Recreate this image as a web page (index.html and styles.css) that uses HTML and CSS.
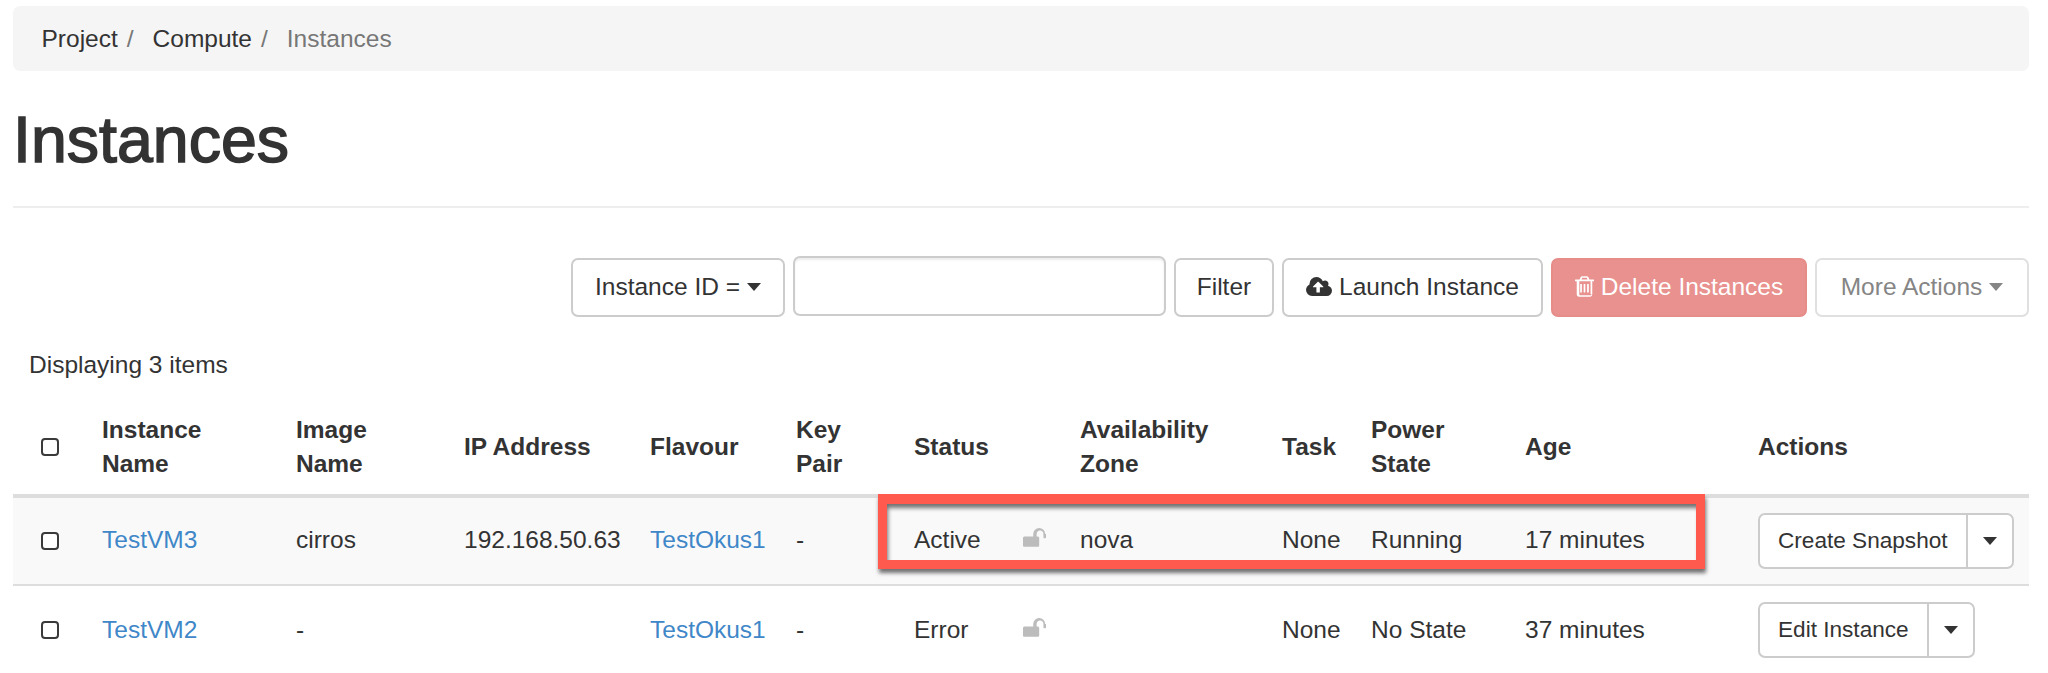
FILE: index.html
```html
<!DOCTYPE html>
<html lang="en">
<head>
<meta charset="utf-8">
<title>Instances</title>
<link rel="stylesheet" href="styles.css">
</head>
<body>
<main class="page">
  <nav class="breadcrumb">
    <span>Project</span><span class="sep">/</span>
    <span>Compute</span><span class="sep">/</span>
    <span class="active">Instances</span>
  </nav>
  <h1 class="title">Instances</h1>
  <hr class="rule">
  <div class="toolbar">
    <button class="btn btn-select">Instance ID =<span class="caret"></span></button>
    <input class="search" type="text" aria-label="Filter">
    <button class="btn btn-filter">Filter</button>
    <button class="btn btn-launch">
      <svg class="icon-cloud" viewBox="0 128 1920 1408" aria-hidden="true"><path fill-rule="evenodd" d="M1280 864q0-14-9-23L919 489q-9-9-23-9t-23 9L522 840q-10 12-10 24 0 14 9 23t23 9h224v352q0 13 9.5 22.5t22.5 9.5h192q13 0 22.5-9.5t9.5-22.5V896h224q13 0 22.5-9.5t9.5-22.5zm640 288q0 159-112.5 271.5T1536 1536H448q-185 0-316.5-131.5T0 1088q0-130 70-240t188-165q-2-30-2-43 0-212 150-362t362-150q156 0 285.5 87T1242 446q71-62 166-62 106 0 181 75t75 181q0 76-41 138 130 31 213.5 135.5T1920 1152z"/></svg>
      Launch Instance
    </button>
    <button class="btn btn-delete">
      <svg class="icon-trash" viewBox="192 128 1408 1536" aria-hidden="true"><path d="M704 736v576q0 14-9 23t-23 9h-64q-14 0-23-9t-9-23V736q0-14 9-23t23-9h64q14 0 23 9t9 23zm256 0v576q0 14-9 23t-23 9h-64q-14 0-23-9t-9-23V736q0-14 9-23t23-9h64q14 0 23 9t9 23zm256 0v576q0 14-9 23t-23 9h-64q-14 0-23-9t-9-23V736q0-14 9-23t23-9h64q14 0 23 9t9 23zm128 724V512H512v948q0 22 7 40.5t14.5 27 10.5 8.5h832q3 0 10.5-8.5t14.5-27 7-40.5zM672 384h448l-48-117q-7-9-17-11H738q-10 2-17 11zm928 32v64q0 14-9 23t-23 9h-96v948q0 83-47 143.5t-113 60.5H480q-66 0-113-58.5T320 1464V512h-96q-14 0-23-9t-9-23v-64q0-14 9-23t23-9h309l70-167q15-37 54-63t79-26h320q40 0 79 26t54 63l70 167h309q14 0 23 9t9 23z"/></svg>
      Delete Instances
    </button>
    <button class="btn btn-more">More Actions<span class="caret"></span></button>
  </div>
  <p class="count">Displaying 3 items</p>
  <table class="grid">
    <colgroup>
      <col class="w-check"><col class="w-name"><col class="w-image"><col class="w-ip"><col class="w-flavour"><col class="w-key"><col class="w-status"><col class="w-lock"><col class="w-zone"><col class="w-task"><col class="w-power"><col class="w-age"><col class="w-actions">
    </colgroup>
    <thead>
      <tr>
        <th class="cell-check"><input class="check" type="checkbox" aria-label="Select all"></th>
        <th>Instance<br>Name</th>
        <th>Image<br>Name</th>
        <th>IP Address</th>
        <th>Flavour</th>
        <th>Key<br>Pair</th>
        <th>Status</th>
        <th></th>
        <th>Availability<br>Zone</th>
        <th>Task</th>
        <th>Power<br>State</th>
        <th>Age</th>
        <th>Actions</th>
      </tr>
    </thead>
    <tbody>
      <tr class="striped">
        <td class="cell-check"><input class="check" type="checkbox" aria-label="Select TestVM3"></td>
        <td><a href="#">TestVM3</a></td>
        <td>cirros</td>
        <td>192.168.50.63</td>
        <td><a href="#">TestOkus1</a></td>
        <td>-</td>
        <td>Active</td>
        <td><svg class="icon-lock" viewBox="0 128 1728 1536" aria-hidden="true"><path d="M1728 576v256q0 26-19 45t-45 19h-64q-26 0-45-19t-19-45V576q0-106-75-181t-181-75-181 75-75 181v192h96q40 0 68 28t28 68v576q0 40-28 68t-68 28H96q-40 0-68-28t-28-68V864q0-40 28-68t68-28h672V576q0-185 131.5-316.5T1216 128t316.5 131.5T1664 576z"/></svg></td>
        <td>nova</td>
        <td>None</td>
        <td>Running</td>
        <td>17 minutes</td>
        <td class="cell-actions"><div class="split"><button class="split-main">Create Snapshot</button><button class="split-toggle" aria-label="More"><span class="caret caret-flush"></span></button></div></td>
      </tr>
      <tr>
        <td class="cell-check"><input class="check" type="checkbox" aria-label="Select TestVM2"></td>
        <td><a href="#">TestVM2</a></td>
        <td>-</td>
        <td></td>
        <td><a href="#">TestOkus1</a></td>
        <td>-</td>
        <td>Error</td>
        <td><svg class="icon-lock" viewBox="0 128 1728 1536" aria-hidden="true"><path d="M1728 576v256q0 26-19 45t-45 19h-64q-26 0-45-19t-19-45V576q0-106-75-181t-181-75-181 75-75 181v192h96q40 0 68 28t28 68v576q0 40-28 68t-68 28H96q-40 0-68-28t-28-68V864q0-40 28-68t68-28h672V576q0-185 131.5-316.5T1216 128t316.5 131.5T1664 576z"/></svg></td>
        <td></td>
        <td>None</td>
        <td>No State</td>
        <td>37 minutes</td>
        <td class="cell-actions"><div class="split"><button class="split-main">Edit Instance</button><button class="split-toggle" aria-label="More"><span class="caret caret-flush"></span></button></div></td>
      </tr>
    </tbody>
  </table>
  <div class="callout"></div>
</main>
</body>
</html>
```
FILE: styles.css
```css
* { box-sizing: border-box; }
html, body { margin: 0; height: 673px; overflow: hidden; background: #fff; }
body {
  font-family: "Liberation Sans", Arial, sans-serif;
  font-size: 24.5px;
  color: #333;
}
.page { position: relative; width: 2048px; height: 673px; padding: 6px 19px 0 13px; overflow: hidden; }

.breadcrumb {
  display: flex; align-items: center; height: 65px; padding: 0 28.5px;
  background: #f5f5f5; border-radius: 7px;
}
.breadcrumb .sep { color: #777; margin: 0 19px 0 9px; }
.breadcrumb .active { color: #777; }

.title { margin: 34px 0 31px; font-size: 64.5px; line-height: 70px; font-weight: 400; color: #333; -webkit-text-stroke: 1.5px #333; }
.rule { margin: 0; height: 2px; border: 0; background: #eee; }

.toolbar { display: flex; justify-content: flex-end; align-items: flex-start; gap: 8px; margin-top: 48px; }
.btn {
  display: flex; align-items: center; justify-content: center; height: 59px; margin-top: 2px; padding: 0 0 2px;
  font: inherit; color: #333; background: #fff;
  border: 2px solid #ccc; border-radius: 7px;
}
.btn-select { width: 214px; }
.search { width: 373px; height: 60px; margin: 0; border: 2px solid #ccc; border-radius: 7px; background: #fff; box-shadow: inset 0 2px 2px rgba(0,0,0,.075); }
.btn-filter { width: 100px; }
.btn-launch { width: 261px; }
.btn-delete { width: 256px; color: #fff; background: #e8918e; border-color: #e68c89; }
.btn-more { width: 214px; color: #858585; border-color: #e0e0e0; }
.caret {
  display: inline-block; width: 0; height: 0; margin-left: 7px;
  border-top: 8px solid currentColor; border-left: 7px solid transparent; border-right: 7px solid transparent;
}
.caret-flush { margin-left: 0; }
.icon-cloud { width: 26px; height: 19px; margin-right: 7px; fill: #333; }
.icon-trash { width: 19px; height: 21px; margin-right: 7px; fill: #fff; }

.count { margin: 0; padding: 0 16px; height: 33px; margin-top: 31px; margin-bottom: 19px; line-height: 33px; }

.grid { width: 2016px; table-layout: fixed; border-collapse: collapse; }
.w-check { width: 75px; } .w-name { width: 194px; } .w-image { width: 168px; } .w-ip { width: 186px; }
.w-flavour { width: 146px; } .w-key { width: 118px; } .w-status { width: 108px; } .w-lock { width: 58px; }
.w-zone { width: 202px; } .w-task { width: 89px; } .w-power { width: 154px; } .w-age { width: 233px; } .w-actions { width: 285px; }
.grid th, .grid td { padding: 0 0 0 14px; text-align: left; vertical-align: middle; line-height: 34px; white-space: nowrap; }
.grid th { padding-top: 13px; padding-bottom: 13px; font-weight: 700; border-bottom: 4px solid #ddd; }
.grid td { height: 89px; border-bottom: 2px solid #ddd; }
.grid .cell-check { padding-left: 28px; }
.striped { background: #f9f9f9; }
.grid .striped td { padding-bottom: 2px; }
.grid .striped .cell-check, .grid .striped .cell-actions { padding-bottom: 0; }
a { color: #3f87c8; text-decoration: none; }
.check {
  appearance: none; display: block; width: 18px; height: 18px; margin: 0;
  background: #fff; border: 2px solid #3a3a3a; border-radius: 4px;
}
.icon-lock { display: block; width: 23px; height: 20.5px; margin: -3px 0 0 1px; fill: #bcbcbc; }

.split { display: inline-flex; height: 56px; vertical-align: middle; border: 2px solid #ccc; border-radius: 7px; background: #fff; }
.split-main, .split-toggle { padding: 0; font: inherit; font-size: 22.6px; color: #333; background: transparent; border: 0; }
.split-main { padding: 0 18px; border-right: 2px solid #ccc; }
.split-toggle { display: flex; align-items: center; justify-content: center; width: 44px; }

.callout {
  position: absolute; left: 878px; top: 494px; width: 827px; height: 75px;
  border-style: solid; border-color: #ff5a4d; border-width: 10px 9px 9px;
  box-shadow: 1px 4px 4px rgba(0,0,0,.55), inset 2px 5px 4px -1px rgba(0,0,0,.55);
}
```
